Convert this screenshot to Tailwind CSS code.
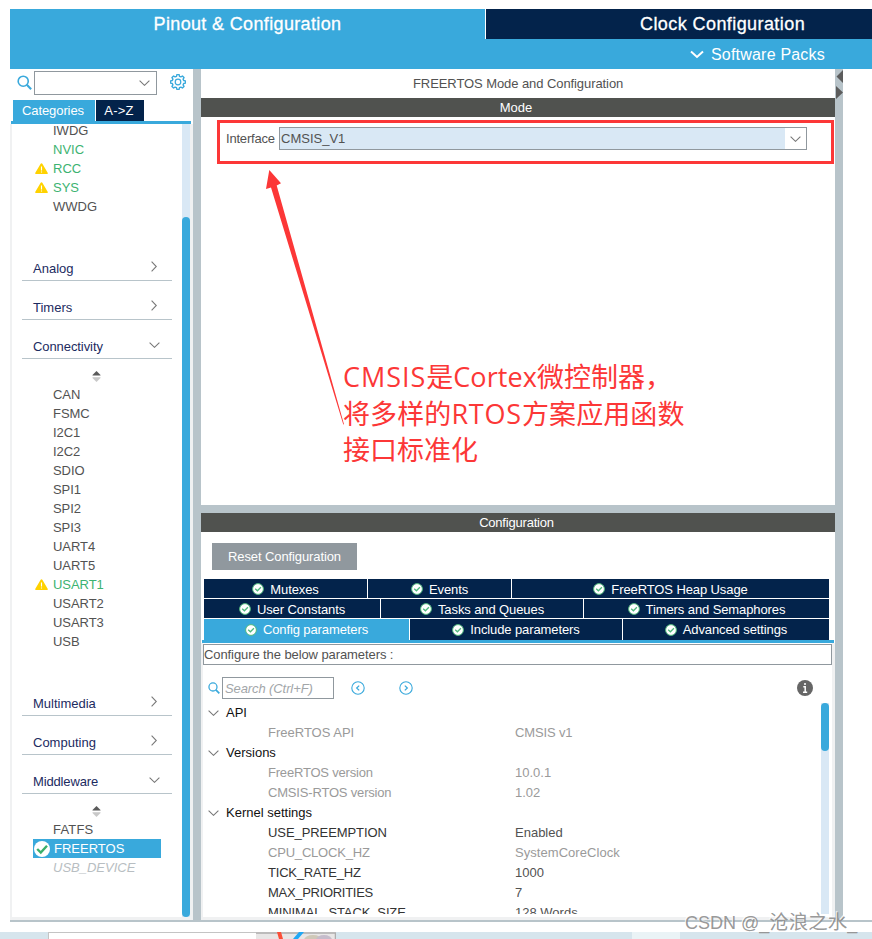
<!DOCTYPE html>
<html lang="zh-CN">
<head>
<meta charset="utf-8">
<title>FREERTOS Mode and Configuration</title>
<script src="https://cdn.jsdelivr.net/npm/@tailwindcss/browser@4"></script>
</head>
<body class="relative flex h-[939px] w-[872px] flex-col overflow-hidden bg-white pt-[9px] font-['Liberation_Sans',Arial,'Noto_Sans_CJK_SC',sans-serif] text-[13px] text-[#525252]">

<svg class="hidden">
  <symbol id="warn" viewBox="0 0 13 11"><path d="M6.5 0.3 Q7.1 0.3 7.5 1 L12.8 10 Q13 11 12.2 11 L0.8 11 Q0 11 0.2 10 L5.5 1 Q5.9 0.3 6.5 0.3Z" fill="#ffd200"/><path d="M6.5 3.4V7.4M6.5 8.4V9.5" stroke="#fff" stroke-width="1.1"/></symbol>
  <symbol id="right" viewBox="0 0 6 11"><path d="M0.6 0.6 5.3 5.5 0.6 10.4" fill="none" stroke="#787878" stroke-width="1.1"/></symbol>
  <symbol id="down" viewBox="0 0 11 6"><path d="M0.6 0.6 5.5 5.3 10.4 0.6" fill="none" stroke="#787878" stroke-width="1.1"/></symbol>
  <symbol id="sort" viewBox="0 0 9 11"><path d="M4.5 0 8.5 4H0.5Z" fill="#5a5a5a"/><path d="M0.5 4.5H8.5" stroke="#aaa"/><path d="M4.5 11 8.5 7H0.5Z" fill="#c8c8c8"/><path d="M0.5 6.5H8.5" stroke="#d4d4d4"/></symbol>
  <symbol id="lens" viewBox="0 0 14 14"><circle cx="5.8" cy="5.8" r="4.7" fill="none" stroke="#39a9dc" stroke-width="1.5"/><path d="M9.2 9.2 13.2 13.2" stroke="#39a9dc" stroke-width="2"/></symbol>
  <symbol id="ok" viewBox="0 0 12 12"><circle cx="6" cy="6" r="5.4" fill="#fff" stroke="#4fb87c" stroke-width="1"/><path d="M3.2 5.8 5.4 7.8 8.9 4.3" fill="none" stroke="#4fb87c" stroke-width="1.3"/></symbol>
</svg>

<header class="ml-[10px] flex h-[60px] shrink-0 bg-[#39a9dc] text-white">
  <div class="h-[30px] w-[475px] text-center text-[18px] leading-[31px] tracking-[0.35px] [-webkit-text-stroke:0.3px_white]">Pinout &amp; Configuration</div>
  <div class="flex w-[387px] flex-col">
    <div class="h-[30px] border-l border-white bg-[#03234b] pl-[154px] text-[18px] leading-[31px] tracking-[0.42px] [-webkit-text-stroke:0.3px_white]">Clock Configuration</div>
    <div class="flex h-[30px] items-center pl-[205px]">
      <svg class="mt-px h-[9px] w-[14px]" viewBox="0 0 14 9"><path d="M1 1.500 7 7 13 1.500" fill="none" stroke="#fff" stroke-width="2"/></svg>
      <span class="mt-[2px] ml-[7px] text-[16px] leading-[30px] tracking-[0.2px]">Software Packs</span>
    </div>
  </div>
</header>

<main class="ml-[10px] flex h-[851px] shrink-0">
  <aside class="flex w-[183px] flex-col">
    <div class="flex h-[31px] items-start pl-[7px]">
      <svg class="mt-[6px] h-[15px] w-[15px]"><use href="#lens"/></svg>
      <div class="mt-[2px] ml-[2px] flex h-[24px] w-[123px] items-center justify-end border border-[#90989e] pr-[6px]"><svg class="h-[6px] w-[11px]"><use href="#down"/></svg></div>
      <svg class="mt-[5px] ml-[13px] h-[16px] w-[16px]" viewBox="0 0 16 16" fill="none" stroke="#39a9dc"><circle cx="8" cy="8" r="2.8" stroke-width="1.2"/><path stroke-width="1.4" stroke-linejoin="round" d="M6.9.6H9.1L9.5 2.3 10.9 2.9 12.4 2 14 3.6 13.1 5.1 13.7 6.5 15.4 6.9V9.1L13.7 9.5 13.1 10.9 14 12.4 12.4 14 10.9 13.1 9.5 13.7 9.1 15.4H6.9L6.5 13.7 5.1 13.1 3.6 14 2 12.4 2.9 10.9 2.3 9.5.6 9.1V6.9L2.3 6.5 2.9 5.1 2 3.6 3.6 2 5.1 2.9 6.5 2.3Z"/></svg>
    </div>
    <div class="flex h-[21px] gap-px pl-[3px] leading-[22px] text-white">
      <div class="w-[82px] bg-[#39a9dc] pr-[2px] text-center tracking-[-0.1px]">Categories</div>
      <div class="w-[48px] bg-[#03234b] pr-[2px] text-center tracking-[0.2px]">A-&gt;Z</div>
    </div>
    <div class="ml-px h-[3px] w-[180px] bg-[#39a9dc]"></div>
    <div class="flex h-[796px] border-x-[3px] border-b-[3px] border-l-[2px] border-[#f0f1f2]">
      <div class="flex h-[793px] w-[170px] flex-col overflow-hidden">
        <ul class="-mt-[3px] pl-[23px] leading-[19px]">
          <li class="h-[19px] pl-[18px]">IWDG</li>
          <li class="h-[19px] pl-[18px] text-[#3cb371]">NVIC</li>
          <li class="flex h-[19px] items-center text-[#3cb371]"><svg class="mr-[5px] h-[11px] w-[13px]"><use href="#warn"/></svg>RCC</li>
          <li class="flex h-[19px] items-center text-[#3cb371]"><svg class="mr-[5px] h-[11px] w-[13px]"><use href="#warn"/></svg>SYS</li>
          <li class="h-[19px] pl-[18px]">WWDG</li>
        </ul>
        <div class="mt-[26px] ml-[10px] w-[150px] text-[#1c2b5f]">
          <div class="flex h-[39px] items-start justify-between border-b border-[#b8c4ca] pt-[17px] pr-[15px] pl-[11px] leading-[19px]"><span>Analog</span><svg class="mt-[2px] h-[11px] w-[6px]"><use href="#right"/></svg></div>
          <div class="flex h-[39px] items-start justify-between border-b border-[#b8c4ca] pt-[17px] pr-[15px] pl-[11px] leading-[19px]"><span>Timers</span><svg class="mt-[2px] h-[11px] w-[6px]"><use href="#right"/></svg></div>
          <div class="flex h-[39px] items-start justify-between border-b border-[#b8c4ca] pt-[17px] pr-[12px] pl-[11px] leading-[19px]"><span class="tracking-[-0.08px]">Connectivity</span><svg class="mt-[5px] h-[6px] w-[11px]"><use href="#down"/></svg></div>
        </div>
        <svg class="mt-[12px] ml-[80px] h-[11px] w-[9px] shrink-0"><use href="#sort"/></svg>
        <ul class="mt-[3px] pl-[23px] leading-[19px] tracking-[-0.05px]">
          <li class="h-[19px] pl-[18px]">CAN</li>
          <li class="h-[19px] pl-[18px]">FSMC</li>
          <li class="h-[19px] pl-[18px]">I2C1</li>
          <li class="h-[19px] pl-[18px]">I2C2</li>
          <li class="h-[19px] pl-[18px]">SDIO</li>
          <li class="h-[19px] pl-[18px]">SPI1</li>
          <li class="h-[19px] pl-[18px]">SPI2</li>
          <li class="h-[19px] pl-[18px]">SPI3</li>
          <li class="h-[19px] pl-[18px]">UART4</li>
          <li class="h-[19px] pl-[18px]">UART5</li>
          <li class="flex h-[19px] items-center text-[#3cb371]"><svg class="mr-[5px] h-[11px] w-[13px]"><use href="#warn"/></svg>USART1</li>
          <li class="h-[19px] pl-[18px]">USART2</li>
          <li class="h-[19px] pl-[18px]">USART3</li>
          <li class="h-[19px] pl-[18px]">USB</li>
        </ul>
        <div class="mt-[26px] ml-[10px] w-[150px] text-[#1c2b5f]">
          <div class="flex h-[39px] items-start justify-between border-b border-[#b8c4ca] pt-[17px] pr-[15px] pl-[11px] leading-[19px]"><span>Multimedia</span><svg class="mt-[2px] h-[11px] w-[6px]"><use href="#right"/></svg></div>
          <div class="flex h-[39px] items-start justify-between border-b border-[#b8c4ca] pt-[17px] pr-[15px] pl-[11px] leading-[19px]"><span>Computing</span><svg class="mt-[2px] h-[11px] w-[6px]"><use href="#right"/></svg></div>
          <div class="flex h-[39px] items-start justify-between border-b border-[#b8c4ca] pt-[17px] pr-[12px] pl-[11px] leading-[19px]"><span class="tracking-[-0.15px]">Middleware</span><svg class="mt-[5px] h-[6px] w-[11px]"><use href="#down"/></svg></div>
        </div>
        <svg class="mt-[12px] ml-[80px] h-[11px] w-[9px] shrink-0"><use href="#sort"/></svg>
        <ul class="mt-[3px] pl-[21px] leading-[19px]">
          <li class="h-[19px] pl-[20px] tracking-[0.2px]">FATFS</li>
          <li class="flex h-[19px] w-[128px] items-center bg-[#39a9dc] pl-px text-white"><svg class="mr-[4px] h-[16px] w-[16px]" viewBox="0 0 16 16"><circle cx="8" cy="8" r="8" fill="#fff"/><path d="M3.2 8 6.8 11.5 13 4.8" fill="none" stroke="#3aaf6b" stroke-width="2.4"/></svg>FREERTOS</li>
          <li class="h-[19px] pl-[20px] text-[#b8bec2] italic">USB_DEVICE</li>
        </ul>
      </div>
      <div class="w-[8px] bg-[#d9e8f5] pt-[93px]"><div class="h-[700px] rounded-full bg-[#39a9dc]"></div></div>
    </div>
  </aside>

  <div class="w-[8px] bg-[#b8c4ca]"></div>

  <section class="flex w-[634px] flex-col">
    <h1 class="h-[29px] pl-[212px] leading-[29px] tracking-[-0.08px]">FREERTOS Mode and Configuration</h1>
    <div class="h-[19px] bg-[#50524f] pr-[4px] text-center leading-[19px] text-white">Mode</div>
    <div class="h-[388px] pt-[3px] pl-[16px]">
      <div class="flex h-[44px] w-[617px] border-[3px] border-[#fc3737] pt-[4px] pl-[6px]">
        <span class="w-[53px] leading-[23px] tracking-[-0.2px]">Interface</span>
        <div class="flex h-[23px] w-[528px] border border-[#90989e] bg-[#d9e8f5]">
          <span class="grow pl-px leading-[21px]">CMSIS_V1</span>
          <div class="flex w-[21px] items-center justify-center bg-white"><svg class="h-[6px] w-[11px]"><use href="#down"/></svg></div>
        </div>
      </div>
    </div>
    <div class="h-[8px] bg-[#b8c4ca]"></div>
    <div class="h-[19px] bg-[#50524f] pr-[3px] text-center leading-[19px] tracking-[-0.2px] text-white">Configuration</div>
    <div class="h-[47px] pt-[11px] pl-[11px]"><div class="h-[27px] w-[145px] bg-[#90989e] text-center leading-[28px] tracking-[-0.1px] text-white">Reset Configuration</div></div>

    <div class="ml-[3px] flex h-[61px] w-[625px] flex-col gap-px self-start leading-[20px] tracking-[-0.1px] text-white">
      <div class="flex h-[19px] gap-px">
        <div class="flex w-[163px] items-center justify-center gap-[6px] bg-[#03234b]"><svg class="h-[12px] w-[12px]"><use href="#ok"/></svg><span class="mt-[2px]">Mutexes</span></div>
        <div class="flex w-[143px] items-center justify-center gap-[6px] bg-[#03234b]"><svg class="h-[12px] w-[12px]"><use href="#ok"/></svg><span class="mt-[2px]">Events</span></div>
        <div class="flex w-[317px] items-center justify-center gap-[6px] bg-[#03234b]"><svg class="h-[12px] w-[12px]"><use href="#ok"/></svg><span class="mt-[2px]">FreeRTOS Heap Usage</span></div>
      </div>
      <div class="flex h-[19px] gap-px">
        <div class="flex w-[176px] items-center justify-center gap-[6px] bg-[#03234b]"><svg class="h-[12px] w-[12px]"><use href="#ok"/></svg><span class="mt-[2px]">User Constants</span></div>
        <div class="flex w-[202px] items-center justify-center gap-[6px] bg-[#03234b]"><svg class="h-[12px] w-[12px]"><use href="#ok"/></svg><span class="mt-[2px]">Tasks and Queues</span></div>
        <div class="flex w-[245px] items-center justify-center gap-[6px] bg-[#03234b]"><svg class="h-[12px] w-[12px]"><use href="#ok"/></svg><span class="mt-[2px]">Timers and Semaphores</span></div>
      </div>
      <div class="flex h-[21px] gap-px">
        <div class="flex w-[205px] items-center justify-center gap-[6px] bg-[#39a9dc]"><svg class="h-[12px] w-[12px]"><use href="#ok"/></svg>Config parameters</div>
        <div class="flex w-[212px] items-center justify-center gap-[6px] bg-[#03234b]"><svg class="h-[12px] w-[12px]"><use href="#ok"/></svg>Include parameters</div>
        <div class="flex w-[206px] items-center justify-center gap-[6px] bg-[#03234b]"><svg class="h-[12px] w-[12px]"><use href="#ok"/></svg>Advanced settings</div>
      </div>
    </div>
    <div class="ml-px h-[3px] w-[632px] bg-[#39a9dc]"></div>
    <div class="h-[277px] border-r-[3px] border-b-[3px] border-l-[2px] border-[#f0f1f2] pt-px">
      <div class="h-[21px] border border-[#90989e] leading-[19px] tracking-[-0.09px]">Configure the below parameters :</div>
      <div class="flex h-[38px] items-center pt-[7px] pl-[5px]">
        <svg class="h-[12px] w-[12px]"><use href="#lens"/></svg>
        <div class="ml-[2px] h-[22px] w-[112px] border border-[#90989e] pl-[2px] leading-[21px] tracking-[-0.1px] text-[#a2a6a9] italic">Search (Ctrl+F)</div>
        <svg class="ml-[17px] h-[14px] w-[14px]" viewBox="0 0 14 14" fill="none" stroke="#39a9dc" stroke-width="1.1"><circle cx="7" cy="7" r="6.2"/><path d="M8.2 4.6 5.7 7 8.2 9.4" stroke-width="1.3"/></svg>
        <svg class="ml-[34px] h-[14px] w-[14px]" viewBox="0 0 14 14" fill="none" stroke="#39a9dc" stroke-width="1.1"><circle cx="7" cy="7" r="6.2"/><path d="M5.8 4.6 8.3 7 5.8 9.4" stroke-width="1.3"/></svg>
        <svg class="mr-[19px] ml-auto h-[16px] w-[16px]" viewBox="0 0 16 16"><circle cx="8" cy="8" r="8" fill="#666"/><path d="M8 3V5M6.300 6.700H8.200V12.200M6 12.300H10.200" fill="none" stroke="#fff" stroke-width="1.500"/></svg>
      </div>
      <div class="flex h-[211px] overflow-hidden">
        <div class="w-[618px] leading-[20px]">
          <div class="flex h-[20px] items-center gap-[7px] pl-[5px] text-[#111]"><svg class="h-[6px] w-[11px]"><use href="#down"/></svg>API</div>
          <div class="flex h-[20px] pl-[65px] text-[#9a9a9a]"><span class="w-[247px]">FreeRTOS API</span><span class="tracking-[-0.15px]">CMSIS v1</span></div>
          <div class="flex h-[20px] items-center gap-[7px] pl-[5px] text-[#111]"><svg class="h-[6px] w-[11px]"><use href="#down"/></svg>Versions</div>
          <div class="flex h-[20px] pl-[65px] text-[#9a9a9a]"><span class="w-[247px] tracking-[-0.2px]">FreeRTOS version</span><span>10.0.1</span></div>
          <div class="flex h-[20px] pl-[65px] text-[#9a9a9a]"><span class="w-[247px] tracking-[-0.18px]">CMSIS-RTOS version</span><span>1.02</span></div>
          <div class="flex h-[20px] items-center gap-[7px] pl-[5px] text-[#111]"><svg class="h-[6px] w-[11px]"><use href="#down"/></svg>Kernel settings</div>
          <div class="flex h-[20px] pl-[65px]"><span class="w-[247px] tracking-[-0.08px] text-[#333]">USE_PREEMPTION</span><span>Enabled</span></div>
          <div class="flex h-[20px] pl-[65px] text-[#9a9a9a]"><span class="w-[247px] tracking-[-0.2px]">CPU_CLOCK_HZ</span><span class="tracking-[0.05px]">SystemCoreClock</span></div>
          <div class="flex h-[20px] pl-[65px]"><span class="w-[247px] tracking-[-0.2px] text-[#333]">TICK_RATE_HZ</span><span>1000</span></div>
          <div class="flex h-[20px] pl-[65px]"><span class="w-[247px] tracking-[-0.3px] text-[#333]">MAX_PRIORITIES</span><span>7</span></div>
          <div class="flex h-[20px] pl-[65px]"><span class="w-[247px] tracking-[-0.12px] text-[#333]">MINIMAL_STACK_SIZE</span><span>128 Words</span></div>
        </div>
        <div class="h-[211px] w-[8px] bg-[#d9e8f5]"><div class="h-[48px] rounded-full bg-[#39a9dc]"></div></div>
      </div>
    </div>
  </section>

  <div class="w-[8px] bg-[#b8c4ca]"><svg class="h-[32px] w-[8px]" viewBox="0 0 8 32" fill="#5c5c5c"><path d="M8 1V14L1.500 7.500ZM1 17V30L8 23.500Z"/></svg></div>
</main>
<div class="ml-[10px] h-[2px] shrink-0 bg-[#b8c4ca]"></div>

<footer class="mt-[10px] flex h-[7px] shrink-0 overflow-hidden bg-[#d6e5ed]">
  <div class="w-[48px]"></div>
  <div class="w-[208px] border-t border-l border-[#c4c4c4] bg-white"></div>
  <svg class="h-[7px] w-[80px]" viewBox="0 0 80 7"><path d="M0 0H80V7H0Z" fill="#e8e6e6"/><path d="M0 1H79.500V7" fill="none" stroke="#adadad" stroke-width="1.500"/><path d="M21 0H25L27 7H23Z" fill="#fb4f38"/><path d="M43 0H48L42 7H37Z" fill="#20a8f5"/><ellipse cx="57" cy="8" rx="9" ry="5" fill="#cfc8b8"/><ellipse cx="68" cy="8" rx="8" ry="5" fill="#c5bccb"/></svg>
  <div class="w-[296px]"></div>
  <div class="w-[48px] bg-[#eaf3f6]"></div>
</footer>

<!-- Annotation laid over the workspace -->
<svg class="absolute top-[165px] left-[260px] h-[265px] w-[90px]" viewBox="260 165 90 265"><path d="M269.300 170 281 183.300 276.700 185.500 344 424.300 343.300 424.500 271 187.500 266 189Z" fill="#fc3737"/></svg>
<div class="absolute top-[360px] left-[343px] font-['Open_Sans','Noto_Sans_CJK_SC',sans-serif] text-[27px] leading-[36px] whitespace-nowrap text-[#fc3737]">
  <div class="-mt-px mb-px"><span class="tracking-[0.95px]">CMSIS</span>是<span class="tracking-[0.1px]">Cortex</span>微控制器，</div>
  <div class="tracking-[0.1px]">将多样的<span class="tracking-[0.8px]">RTOS</span>方案应用函数</div>
  <div>接口标准化</div>
</div>
<div class="absolute top-[907px] left-[685px] text-[18px] leading-[27px] whitespace-nowrap text-[#8c8c8c]/90 [text-shadow:-1px_-1px_0_rgba(255,255,255,0.8)]">CSDN @_<span class="font-['Noto_Sans_CJK_SC',sans-serif] text-[19.500px]">沧浪之水</span>_</div>
</body>
</html>
